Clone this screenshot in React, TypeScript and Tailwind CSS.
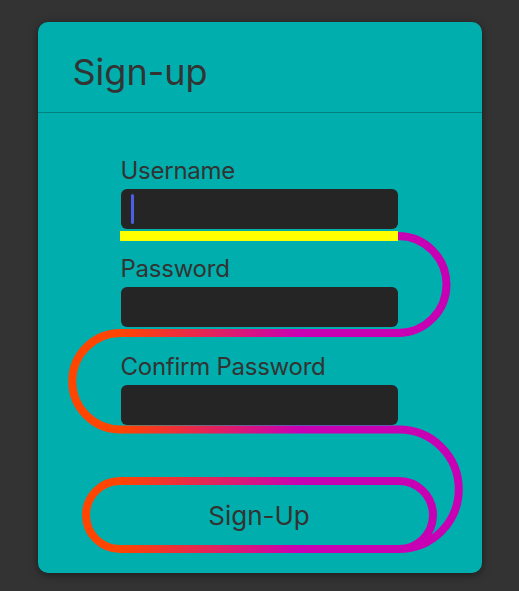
import React from "react";

const fields = [
  { label: "Username", focused: true },
  { label: "Password", focused: false },
  { label: "Confirm Password", focused: false },
];

export default function App() {
  return (
    <div className="min-h-[591px] bg-[#333333] flex justify-center pt-[22px] font-['Inter','Liberation_Sans',sans-serif] text-[#333333]">
      <div className="relative w-[444px] h-[551px] bg-[#00afad] rounded-[10px] shadow-[0_2px_8px_rgba(0,0,0,0.45)] flex flex-col">
        {/* header */}
        <div className="h-[91px] border-b border-[#00807e] pl-[35px] pt-[32px] text-[36px] leading-none">
          Sign-up
        </div>

        {/* form */}
        <div className="flex flex-col pt-[46px] pl-[83px] gap-[28px]">
          {fields.map((f) => (
            <div key={f.label} className="flex flex-col">
              <label className="text-[24px] leading-none tracking-[-0.25px] mb-[6px]">{f.label}</label>
              <div className="w-[277px] h-[40px] bg-[#252525] rounded-[6px] flex items-center pl-[10px]">
                {f.focused && <span className="w-[3px] h-[30px] bg-[#4b5ee4] rounded-full" />}
              </div>
            </div>
          ))}
        </div>

        <button className="mt-[56px] ml-[48px] w-[347px] h-[68px] rounded-full flex items-center justify-center text-[26px] text-[#333333]">
          Sign-Up
        </button>

        {/* animated outline path */}
        <svg
          className="absolute inset-0 pointer-events-none"
          width="444"
          height="551"
          viewBox="0 0 444 551"
          fill="none"
        >
          <defs>
            <linearGradient id="snake" gradientUnits="userSpaceOnUse" x1="82" y1="0" x2="262" y2="0">
              <stop offset="0" stopColor="#ff4500" />
              <stop offset="1" stopColor="#c800b4" />
            </linearGradient>
          </defs>
          <path
            d="M 360 214 A 48.5 48.5 0 0 1 360 311 L 82.5 311 A 48.25 48.25 0 0 0 82.5 407.5 L 361 407.5 A 59.75 59.75 0 0 1 361 527 L 82 527 A 34 34 0 0 1 82 459 L 361 459 A 34 34 0 0 1 361 527"
            stroke="url(#snake)"
            strokeWidth="8"
          />
          <path d="M 82 214 L 360 214" stroke="#ffff00" strokeWidth="10" />
        </svg>
      </div>
    </div>
  );
}
